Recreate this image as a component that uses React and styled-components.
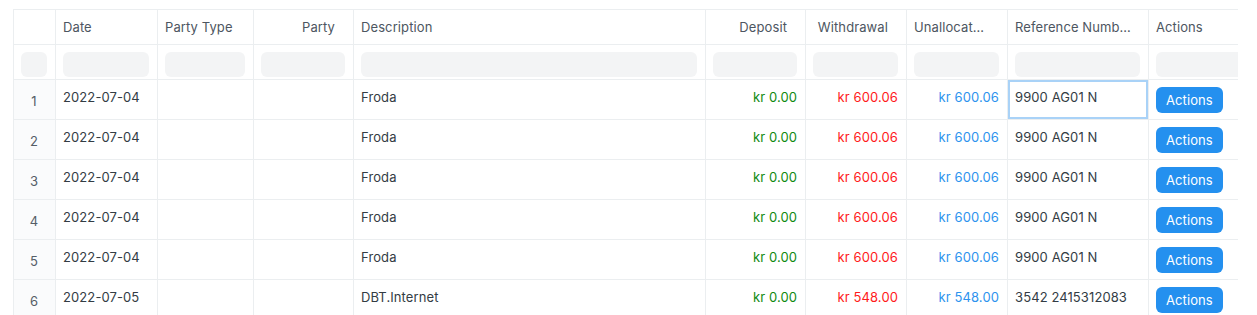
import React from 'react';
import styled, { createGlobalStyle } from 'styled-components';

const GlobalStyle = createGlobalStyle`
  html, body {
    margin: 0;
    padding: 0;
    background: #ffffff;
    overflow: hidden;
  }
  body {
    font-family: Inter, "Noto Sans", "Liberation Sans", sans-serif;
    font-size: 13px;
    color: #333c44;
  }
`;

const COLUMNS = [42, 102, 96, 100, 352, 100, 101, 101, 141, 150];

const Page = styled.div`
  padding: 9px 0 0 13px;
`;

const Scroller = styled.div`
  width: 1225px;
  overflow: hidden;
`;

const Table = styled.div`
  display: grid;
  grid-template-columns: ${COLUMNS.map((w) => `${w}px`).join(' ')};
  width: max-content;
  border-top: 1px solid #ebeef0;
  border-left: 1px solid #ebeef0;
`;

const Cell = styled.div`
  box-sizing: border-box;
  height: ${(p) => p.$height || 40}px;
  border-right: 1px solid #ebeef0;
  border-bottom: 1px solid #ebeef0;
  padding: 0 8px 0 7px;
  line-height: 20px;
  letter-spacing: 0.1px;
  white-space: nowrap;
  overflow: hidden;
  text-overflow: ellipsis;
  text-align: ${(p) => p.$align || 'left'};
  background: ${(p) => (p.$index ? '#fafbfc' : '#ffffff')};
  position: relative;
`;

const HeadCell = styled(Cell)`
  color: #4d5661;
  padding-top: 7px;
  padding-right: ${(p) => (p.$align === 'right' ? '18px' : '17px')};
`;

const FilterCell = styled(Cell)`
  padding-top: 7px;
  padding-left: 7px;
  padding-right: 8px;
`;

const FilterInput = styled.div`
  height: 25px;
  border-radius: 6px;
  background: #f3f4f5;
`;

const DataCell = styled(Cell)`
  padding-top: 7px;
  color: ${(p) => p.$color || '#333c44'};
`;

const IndexCell = styled(Cell)`
  display: flex;
  align-items: center;
  justify-content: center;
  color: #555e67;
  padding: 2px 1px 0 0;
`;

const FocusRing = styled.div`
  position: absolute;
  inset: 0 0 0 0;
  border: 2px solid #a9d2f7;
  pointer-events: none;
`;

const ActionButton = styled.button`
  height: 26px;
  padding: 0 10px;
  border: none;
  border-radius: 6px;
  background: #2490ef;
  color: #ffffff;
  font-family: inherit;
  font-size: 13px;
  letter-spacing: 0.1px;
  line-height: 26px;
`;

const headers = [
  { label: '', align: 'left' },
  { label: 'Date', align: 'left' },
  { label: 'Party Type', align: 'left' },
  { label: 'Party', align: 'right' },
  { label: 'Description', align: 'left' },
  { label: 'Deposit', align: 'right' },
  { label: 'Withdrawal', align: 'right' },
  { label: 'Unallocated Amount', align: 'right' },
  { label: 'Reference Number', align: 'left' },
  { label: 'Actions', align: 'left' },
];

const rows = [
  { date: '2022-07-04', desc: 'Froda', dep: 'kr 0.00', wd: 'kr 600.06', un: 'kr 600.06', ref: '9900 AG01 N' },
  { date: '2022-07-04', desc: 'Froda', dep: 'kr 0.00', wd: 'kr 600.06', un: 'kr 600.06', ref: '9900 AG01 N' },
  { date: '2022-07-04', desc: 'Froda', dep: 'kr 0.00', wd: 'kr 600.06', un: 'kr 600.06', ref: '9900 AG01 N' },
  { date: '2022-07-04', desc: 'Froda', dep: 'kr 0.00', wd: 'kr 600.06', un: 'kr 600.06', ref: '9900 AG01 N' },
  { date: '2022-07-04', desc: 'Froda', dep: 'kr 0.00', wd: 'kr 600.06', un: 'kr 600.06', ref: '9900 AG01 N' },
  { date: '2022-07-05', desc: 'DBT.Internet', dep: 'kr 0.00', wd: 'kr 548.00', un: 'kr 548.00', ref: '3542 2415312083' },
];

export default function App() {
  return (
    <>
      <GlobalStyle />
      <Page>
        <Scroller>
          <Table>
            {headers.map((h, i) => (
              <HeadCell key={`h${i}`} $height={35} $align={h.align}>
                {h.label}
              </HeadCell>
            ))}
            {headers.map((h, i) => (
              <FilterCell key={`f${i}`} $height={35}>
                <FilterInput />
              </FilterCell>
            ))}
            {rows.map((r, i) => (
              <React.Fragment key={i}>
                <IndexCell $index>{i + 1}</IndexCell>
                <DataCell>{r.date}</DataCell>
                <DataCell />
                <DataCell />
                <DataCell>{r.desc}</DataCell>
                <DataCell $align="right" $color="#0f8a0f">{r.dep}</DataCell>
                <DataCell $align="right" $color="#ff1a1a">{r.wd}</DataCell>
                <DataCell $align="right" $color="#2d93ee">{r.un}</DataCell>
                <DataCell>
                  {r.ref}
                  {i === 0 && <FocusRing />}
                </DataCell>
                <DataCell>
                  <ActionButton>Actions</ActionButton>
                </DataCell>
              </React.Fragment>
            ))}
          </Table>
        </Scroller>
      </Page>
    </>
  );
}
